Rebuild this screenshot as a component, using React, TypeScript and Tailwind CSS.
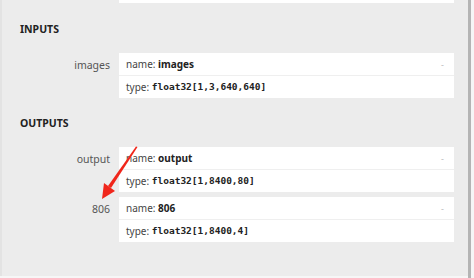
import React from "react"

type Io = { label: string; name: string; type: string }

const inputs: Io[] = [{ label: "images", name: "images", type: "float32[1,3,640,640]" }]
const outputs: Io[] = [
  { label: "output", name: "output", type: "float32[1,8400,80]" },
  { label: "806", name: "806", type: "float32[1,8400,4]" },
]

function Row({ io }: { io: Io }) {
  return (
    <div className="flex">
      <div className="w-[119px] shrink-0 pr-[9px] pt-px text-right text-[10.5px] leading-[22px] text-[#555]">{io.label}</div>
      <div className="w-[335px] bg-white">
        <div className="flex h-[22px] items-center justify-between pl-[7px] pr-[10px] pt-px text-[10px] text-[#444]">
          <span>
            name: <b className="font-bold text-[#222]">{io.name}</b>
          </span>
          <span className="text-[9px] text-[#bbb]">-</span>
        </div>
        <div className="h-px bg-[#efefef]" />
        <div className="flex h-[22px] items-center pl-[7px] text-[10px] text-[#444]">
          type:&nbsp;
          <span className="font-['DejaVu_Sans_Mono',monospace] text-[9.5px] font-bold text-[#222]">{io.type}</span>
        </div>
      </div>
    </div>
  )
}

export default function App() {
  return (
    <div className="relative flex h-[278px] w-[474px] overflow-hidden bg-[#f6f6f6] font-['Noto_Sans',sans-serif]">
      <div className="flex h-[276px] w-[468px] flex-col border-l-2 border-[#e3e3e3] bg-[#ececec]">
        {/* tail of previous box */}
        <div className="ml-[117px] h-[3px] w-[335px] bg-white" />

        <div className="mt-[19px] pl-[18px] text-[10.5px] font-bold leading-[14px] text-[#222]">INPUTS</div>
        <div className="mt-[17px] flex flex-col gap-[5px] -ml-[2px]">
          {inputs.map((io) => (
            <Row key={io.label} io={io} />
          ))}
        </div>

        <div className="mt-[18px] pl-[18px] text-[10.5px] font-bold leading-[14px] text-[#222]">OUTPUTS</div>
        <div className="mt-[17px] flex flex-col gap-[5px] -ml-[2px]">
          {outputs.map((io) => (
            <Row key={io.label} io={io} />
          ))}
        </div>
      </div>
      <div className="w-[3px] bg-[#b4b4b4]" />

      {/* red annotation arrow */}
      <svg className="absolute left-0 top-0" width="474" height="278" viewBox="0 0 474 278">
        <polygon points="137.5,147 136,146.5 108,186 111,188" fill="#f0261b" />
        <polygon points="102,199 104,183 115,191" fill="#f0261b" />
      </svg>
    </div>
  )
}
